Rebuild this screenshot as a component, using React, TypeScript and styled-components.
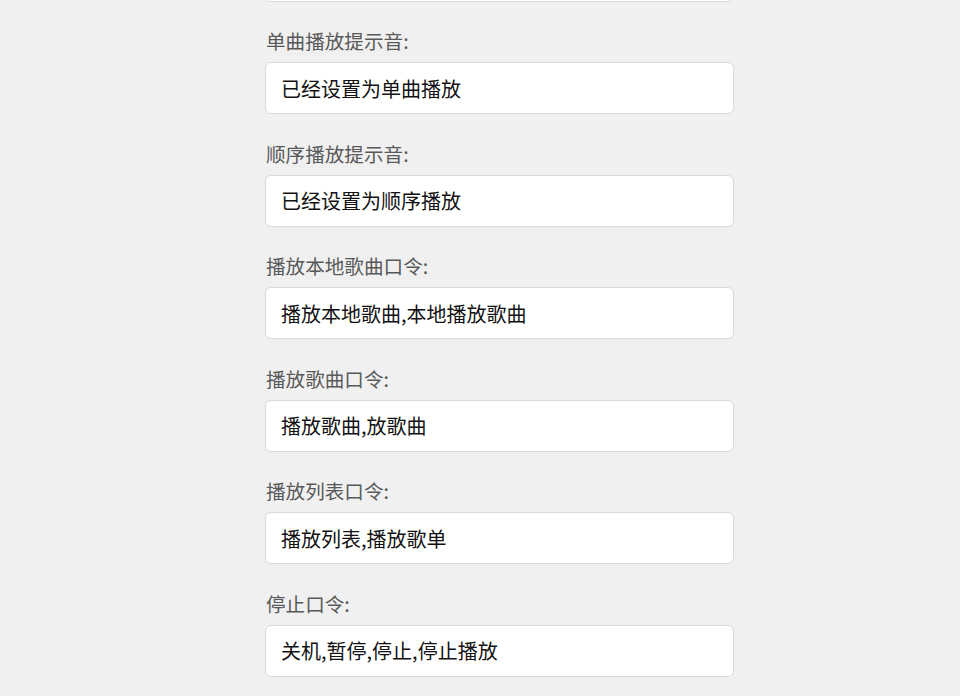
import React from "react";
import styled, { createGlobalStyle } from "styled-components";

const GlobalStyle = createGlobalStyle`
  html, body {
    margin: 0;
    padding: 0;
    background: #f0f0f0;
    font-family: "Noto Sans CJK SC", "Noto Sans", sans-serif;
  }
  body { overflow: hidden; }
`;

const Page = styled.div`
  height: 696px;
  overflow: hidden;
  padding-left: 265px;
`;

const Form = styled.div`
  width: 469px;
  margin-top: -85.5px;
  display: flex;
  flex-direction: column;
`;

const Group = styled.div`
  display: flex;
  flex-direction: column;
  margin-bottom: 25.5px;
`;

const Label = styled.label`
  font-size: 19.6px;
  line-height: 28px;
  color: #595959;
  margin-bottom: 7px;
  padding-left: 1px;
`;

const Input = styled.input`
  box-sizing: border-box;
  height: 52px;
  width: 100%;
  padding: 0 15px;
  border: 1px solid #d9d9d9;
  border-radius: 6px;
  background: #fff;
  font-family: "Noto Sans CJK SC", "Noto Sans", sans-serif;
  font-size: 20px;
  color: #111;
  outline: none;
`;

const fields = [
  { label: "循环播放提示音:", value: "" },
  { label: "单曲播放提示音:", value: "已经设置为单曲播放" },
  { label: "顺序播放提示音:", value: "已经设置为顺序播放" },
  { label: "播放本地歌曲口令:", value: "播放本地歌曲,本地播放歌曲" },
  { label: "播放歌曲口令:", value: "播放歌曲,放歌曲" },
  { label: "播放列表口令:", value: "播放列表,播放歌单" },
  { label: "停止口令:", value: "关机,暂停,停止,停止播放" },
];

export default function App() {
  return (
    <>
      <GlobalStyle />
      <Page>
        <Form>
          {fields.map((f) => (
            <Group key={f.label}>
              <Label>{f.label}</Label>
              <Input defaultValue={f.value} readOnly />
            </Group>
          ))}
        </Form>
      </Page>
    </>
  );
}
